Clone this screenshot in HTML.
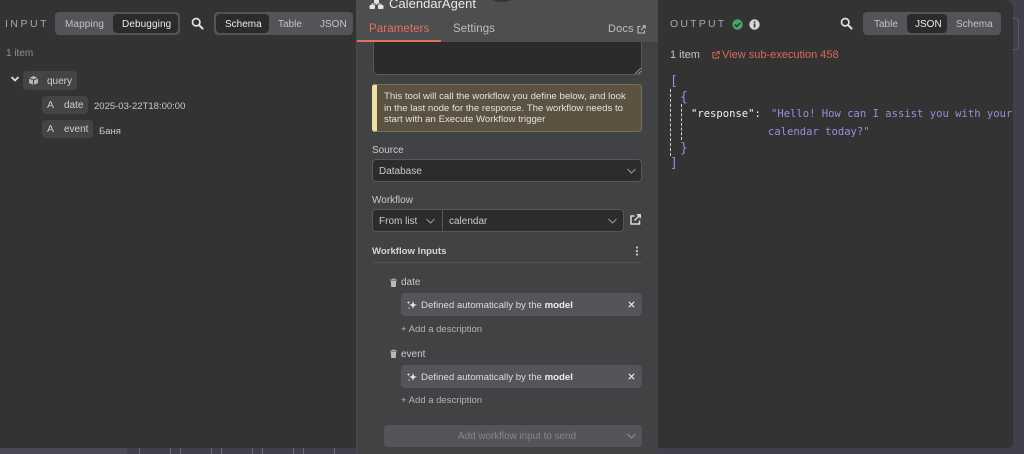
<!DOCTYPE html>
<html><head><meta charset="utf-8"><style>
html,body{margin:0;padding:0}
body{width:1024px;height:454px;overflow:hidden;position:relative;background:#403f4c;font-family:"Liberation Sans","Noto Sans CJK SC",sans-serif;color:#d4d4d6}
.a{position:absolute;white-space:nowrap;line-height:14px}
.b{position:absolute;box-sizing:border-box}
svg{position:absolute;overflow:visible}
.t{font-size:10px}
.seg{background:#535458;border-radius:4px}
.act{background:#2b2b2b;border-radius:4px}
.inp{background:#2c2c2c;border:1px solid #57585b;border-radius:4px}
.pill{background:#434445;border-radius:4px}
.ai{background:#545558;border-radius:4px}
.mono{font-family:"DejaVu Sans Mono","Liberation Mono",monospace;font-size:10.55px;line-height:14px;position:absolute;white-space:pre}
.br{font-size:13px}
.tk{position:absolute;top:448px;width:1px;height:6px;background:#6a6a72}
</style></head><body>
<div class="b" style="left:0;top:0;width:356px;height:448px;background:#333"></div>
<div class="b" style="left:0;top:448px;width:127px;height:6px;background:#4a4955"></div>
<i class="tk" style="left:139px"></i><i class="tk" style="left:170px"></i><i class="tk" style="left:180px"></i><i class="tk" style="left:211px"></i><i class="tk" style="left:221px"></i><i class="tk" style="left:252px"></i><i class="tk" style="left:262px"></i><i class="tk" style="left:293px"></i><i class="tk" style="left:303px"></i><i class="tk" style="left:334px"></i>
<div class="b" style="left:658px;top:0;width:355px;height:448px;background:#333;border-radius:0 8px 6px 0"></div>
<div class="b" style="left:1013px;top:18px;width:6px;height:32px;border:1px solid #5a5a64;border-left:none;border-radius:0 3px 3px 0"></div>
<div class="b" style="left:356px;top:0;width:302px;height:454px;background:#414244;border-left:1px solid #4c4d50"></div>

<!-- INPUT -->
<div class="a" style="left:5px;top:17px;font-size:10.500px;letter-spacing:2.500px;color:#a9aaad">INPUT</div>
<div class="b seg" style="left:55px;top:12px;width:125px;height:23px"></div>
<div class="b act" style="left:113px;top:14px;width:65px;height:19px"></div>
<div class="a t" style="left:65px;top:18px;letter-spacing:.1px;color:#c3c4c6">Mapping</div>
<div class="a t" style="left:122px;top:18px;letter-spacing:.1px;color:#ececec">Debugging</div>
<svg style="left:191px;top:17px" width="13" height="13" viewBox="0 0 13 13"><circle cx="5.200" cy="5.200" r="3.700" fill="none" stroke="#e2e2e2" stroke-width="1.700"/><path d="M8 8l3.600 3.600" stroke="#e2e2e2" stroke-width="2" stroke-linecap="round"/></svg>
<div class="b seg" style="left:214px;top:12px;width:139px;height:23px"></div>
<div class="b act" style="left:216px;top:14px;width:53px;height:19px"></div>
<div class="a t" style="left:225px;top:18px;color:#ececec">Schema</div>
<div class="a t" style="left:278px;top:18px;color:#c3c4c6">Table</div>
<div class="a t" style="left:320px;top:18px;color:#c3c4c6">JSON</div>
<div class="a" style="left:6px;top:47px;font-size:10px;color:#8f9093">1 item</div>
<svg style="left:10px;top:75px" width="10" height="8" viewBox="0 0 10 8"><path d="M1.500 2l3.500 3.500L8.500 2" fill="none" stroke="#dcdcdc" stroke-width="1.800"/></svg>
<div class="b pill" style="left:23px;top:71px;width:54px;height:19px"></div>
<svg style="left:28px;top:75px" width="11" height="11" viewBox="0 0 11 11"><path d="M5.500 1L10 3v5l-4.500 2L1 8V3z" fill="#b5b6b8"/><path d="M1 3l4.500 2L10 3M5.500 5v5" stroke="#434445" fill="none"/></svg>
<div class="a t" style="left:47px;top:75px;color:#cfcfd1">query</div>
<div class="b pill" style="left:42px;top:96px;width:46px;height:18px"></div>
<div class="a" style="left:47px;top:98px;font-size:10.500px;color:#c9c9cb">A</div>
<div class="a t" style="left:64px;top:99px;color:#cfcfd1">date</div>
<div class="a" style="left:94px;top:100px;font-size:9.500px;color:#c9c9cb">2025-03-22T18:00:00</div>
<div class="b pill" style="left:42px;top:120px;width:51px;height:18px"></div>
<div class="a" style="left:47px;top:122px;font-size:10.500px;color:#c9c9cb">A</div>
<div class="a t" style="left:64px;top:123px;color:#cfcfd1">event</div>
<div class="a" style="left:99px;top:125px;font-size:9.500px;color:#c9c9cb">Баня</div>

<!-- NDV center header -->
<div class="b" style="left:357px;top:0;width:301px;height:42px;background:#4d4e50"></div>
<div class="b" style="left:357px;top:40px;width:84px;height:2px;background:#e5705e"></div>
<div class="b" style="left:490px;top:-9px;width:24px;height:11px;border-radius:50%;background:#343434"></div>
<svg style="left:369px;top:-1px" width="15" height="11" viewBox="0 0 15 11"><rect x="5" y="0" width="5" height="4" fill="#e6e6e6"/><rect x="0.500" y="6" width="5.500" height="4" rx="1" fill="#e6e6e6"/><rect x="9" y="6" width="5.500" height="4" rx="1" fill="#e6e6e6"/><path d="M7.500 3.500V5M3 6V5h9v1" stroke="#e6e6e6" fill="none"/></svg>
<div class="a" style="left:389px;top:-3px;font-size:13px;letter-spacing:.02px;color:#eaeaea">CalendarAgent</div>
<div class="a" style="left:369px;top:22px;font-size:11.500px;letter-spacing:.1px;color:#e8705e">Parameters</div>
<div class="a" style="left:453px;top:22px;font-size:11.500px;letter-spacing:.05px;color:#bdbec0">Settings</div>
<div class="a" style="left:608px;top:22px;font-size:11px;letter-spacing:.2px;color:#bdbec0">Docs</div>
<svg style="left:637px;top:25px" width="9" height="9" viewBox="0 0 9 9"><path d="M7.500 5.500V8H1V1.500h2.500M4 5l4-4M5.500 .8h2.700v2.700" fill="none" stroke="#bdbec0" stroke-width="1.100"/></svg>

<!-- textarea -->
<div class="b inp" style="left:373px;top:42px;width:269px;height:33px;border-top:none;border-radius:0 0 4px 4px;background:#2b2b2b"></div>
<svg style="left:635px;top:68px" width="6" height="6" viewBox="0 0 6 6"><path d="M0 6l6-6M3 6l3-3" stroke="#aaa" stroke-width=".8"/></svg>

<!-- notice -->
<div class="b" style="left:372px;top:84px;width:270px;height:48px;background:#5b5241;border:1px solid #7a6d52;border-left:5px solid #f2dca6;border-radius:3px"></div>
<div class="a" style="left:384px;top:91px;font-size:9.650px;line-height:11.600px;color:#e2e2df">This tool will call the workflow you define below, and look<br>in the last node for the response. The workflow needs to<br>start with an Execute Workflow trigger</div>

<!-- Source -->
<div class="a" style="left:372px;top:144px;font-size:10px;color:#c9cacb">Source</div>
<div class="b inp" style="left:372px;top:159px;width:270px;height:23px"></div>
<div class="a t" style="left:379px;top:165px;color:#c9cacb">Database</div>
<svg style="left:626px;top:168px" width="11" height="6" viewBox="0 0 11 6"><path d="M1.500 1l4 4 4-4" fill="none" stroke="#9c9d9f"/></svg>

<!-- Workflow -->
<div class="a" style="left:372px;top:194px;font-size:10px;color:#c9cacb">Workflow</div>
<div class="b inp" style="left:372px;top:209px;width:252px;height:23px"></div>
<div class="b" style="left:442px;top:210px;width:1px;height:21px;background:#57585b"></div>
<div class="a t" style="left:379px;top:215px;color:#c9cacb">From list</div>
<svg style="left:425px;top:218px" width="11" height="6" viewBox="0 0 11 6"><path d="M1.500 1l4 4 4-4" fill="none" stroke="#9c9d9f"/></svg>
<div class="a t" style="left:449px;top:215px;color:#c9cacb">calendar</div>
<svg style="left:607px;top:218px" width="11" height="6" viewBox="0 0 11 6"><path d="M1.500 1l4 4 4-4" fill="none" stroke="#9c9d9f"/></svg>
<svg style="left:630px;top:214px" width="11" height="11" viewBox="0 0 11 11"><path d="M9.500 6.500V10H1V2h3.500M4.500 6.500L10 1M6.800 .8h3.400v3.400" fill="none" stroke="#dcdcdc" stroke-width="1.500"/></svg>

<!-- Workflow inputs -->
<div class="a" style="left:372px;top:245px;font-size:9.600px;font-weight:bold;color:#d4d5d6">Workflow Inputs</div>
<svg style="left:635px;top:246px" width="4" height="10" viewBox="0 0 4 10"><circle cx="2" cy="1.500" r="1.100" fill="#c9cacb"/><circle cx="2" cy="5" r="1.100" fill="#c9cacb"/><circle cx="2" cy="8.500" r="1.100" fill="#c9cacb"/></svg>
<div class="b" style="left:372px;top:262px;width:270px;height:1px;background:#515254"></div>

<svg style="left:390px;top:278px" width="8" height="9" viewBox="0 0 8 9"><path d="M0 1.500h7v1H0zM2.500 .5h2v1h-2zM.8 3h5.400l-.4 6H1.200z" fill="#b9babc"/></svg>
<div class="a" style="left:401px;top:276px;font-size:10px;color:#c9cacb">date</div>
<div class="b ai" style="left:401px;top:293px;width:241px;height:23px"></div>
<svg style="left:407px;top:300px" width="10" height="10" viewBox="0 0 10 10"><path d="M6 1l1 3 3 1-3 1-1 3-1-3-3-1 3-1z" fill="#e6e6e6"/><path d="M1.500 1l.5 1 1 .5-1 .5-.5 1-.5-1L0 2.500l1-.5zM2 7l.4.700.6.300-.6.300L2 9l-.4-.7L1 8l.6-.3z" fill="#e6e6e6"/></svg>
<div class="a" style="left:421px;top:299px;font-size:9.650px;color:#dcdcdd">Defined automatically by the <b style="color:#efefef">model</b></div>
<svg style="left:628px;top:301px" width="7" height="7" viewBox="0 0 7 7"><path d="M.8.800l5.400 5.400M6.200.8L.8 6.200" stroke="#e6e6e6" stroke-width="1.200"/></svg>
<div class="a" style="left:401px;top:323px;font-size:9.500px;color:#b3b4b6">+ Add a description</div>

<svg style="left:390px;top:349px" width="8" height="9" viewBox="0 0 8 9"><path d="M0 1.500h7v1H0zM2.500 .5h2v1h-2zM.8 3h5.400l-.4 6H1.200z" fill="#b9babc"/></svg>
<div class="a" style="left:401px;top:348px;font-size:10px;color:#c9cacb">event</div>
<div class="b ai" style="left:401px;top:365px;width:241px;height:23px"></div>
<svg style="left:407px;top:372px" width="10" height="10" viewBox="0 0 10 10"><path d="M6 1l1 3 3 1-3 1-1 3-1-3-3-1 3-1z" fill="#e6e6e6"/><path d="M1.500 1l.5 1 1 .5-1 .5-.5 1-.5-1L0 2.500l1-.5zM2 7l.4.700.6.300-.6.300L2 9l-.4-.7L1 8l.6-.3z" fill="#e6e6e6"/></svg>
<div class="a" style="left:421px;top:371px;font-size:9.650px;color:#dcdcdd">Defined automatically by the <b style="color:#efefef">model</b></div>
<svg style="left:628px;top:373px" width="7" height="7" viewBox="0 0 7 7"><path d="M.8.800l5.400 5.400M6.200.8L.8 6.200" stroke="#e6e6e6" stroke-width="1.200"/></svg>
<div class="a" style="left:401px;top:394px;font-size:9.500px;color:#b3b4b6">+ Add a description</div>

<div class="b ai" style="left:384px;top:425px;width:258px;height:22px"></div>
<div class="a" style="left:458px;top:430px;font-size:9.900px;color:#86878a">Add workflow input to send</div>
<svg style="left:626px;top:433px" width="11" height="6" viewBox="0 0 11 6"><path d="M1.500 1l4 4 4-4" fill="none" stroke="#8f9093"/></svg>

<!-- OUTPUT -->
<div class="a" style="left:670px;top:17px;font-size:10.500px;letter-spacing:2.200px;color:#a9aaad">OUTPUT</div>
<svg style="left:732px;top:19px" width="11" height="11" viewBox="0 0 11 11"><circle cx="5.500" cy="5.500" r="5.200" fill="#4aa566"/><path d="M2.800 5.500l2 2 3.400-3.600" fill="none" stroke="#333" stroke-width="1.500"/></svg>
<svg style="left:749px;top:19px" width="11" height="11" viewBox="0 0 11 11"><circle cx="5.500" cy="5.500" r="5.200" fill="#d8d8d8"/><rect x="4.700" y="4.500" width="1.700" height="4" fill="#333"/><rect x="4.700" y="2.300" width="1.700" height="1.500" fill="#333"/></svg>
<svg style="left:840px;top:17px" width="13" height="13" viewBox="0 0 13 13"><circle cx="5.200" cy="5.200" r="3.700" fill="none" stroke="#e2e2e2" stroke-width="1.700"/><path d="M8 8l3.600 3.600" stroke="#e2e2e2" stroke-width="2" stroke-linecap="round"/></svg>
<div class="b seg" style="left:863px;top:12px;width:138px;height:23px"></div>
<div class="b act" style="left:907px;top:14px;width:40px;height:19px"></div>
<div class="a t" style="left:874px;top:18px;color:#c3c4c6">Table</div>
<div class="a t" style="left:915px;top:18px;color:#ececec">JSON</div>
<div class="a t" style="left:956px;top:18px;color:#c3c4c6">Schema</div>
<div class="a" style="left:670px;top:48px;font-size:11px;color:#c3c4c6">1 item</div>
<svg style="left:712px;top:51px" width="8" height="8" viewBox="0 0 8 8"><path d="M6.500 4.800V7H1V1.500h2.300M3.300 4.500L7 .8M4.800.7h2.500v2.500" fill="none" stroke="#d9695a" stroke-width="1"/></svg>
<div class="a" style="left:722px;top:48px;font-size:11px;color:#d9695a">View sub-execution 458</div>

<div class="mono br" style="left:670px;top:75px;color:#9490dc">[</div>
<div class="mono br" style="left:680px;top:91px;color:#9490dc">{</div>
<div class="mono" style="left:691px;top:107px;color:#f0f0f0">"response":</div>
<div class="mono" style="left:771px;top:107px;width:243px;overflow:hidden;color:#9490dc">"Hello! How can I assist you with your</div>
<div class="mono" style="left:768px;top:125px;color:#9490dc">calendar today?"</div>
<div class="mono br" style="left:680px;top:142px;color:#9490dc">}</div>
<div class="mono br" style="left:670px;top:157px;color:#9490dc">]</div>
<div class="b" style="left:670px;top:89px;width:0;height:67px;border-left:1px dashed #cfcfcf"></div>
<div class="b" style="left:681px;top:104px;width:0;height:36px;border-left:1px dashed #cfcfcf"></div>
</body></html>
